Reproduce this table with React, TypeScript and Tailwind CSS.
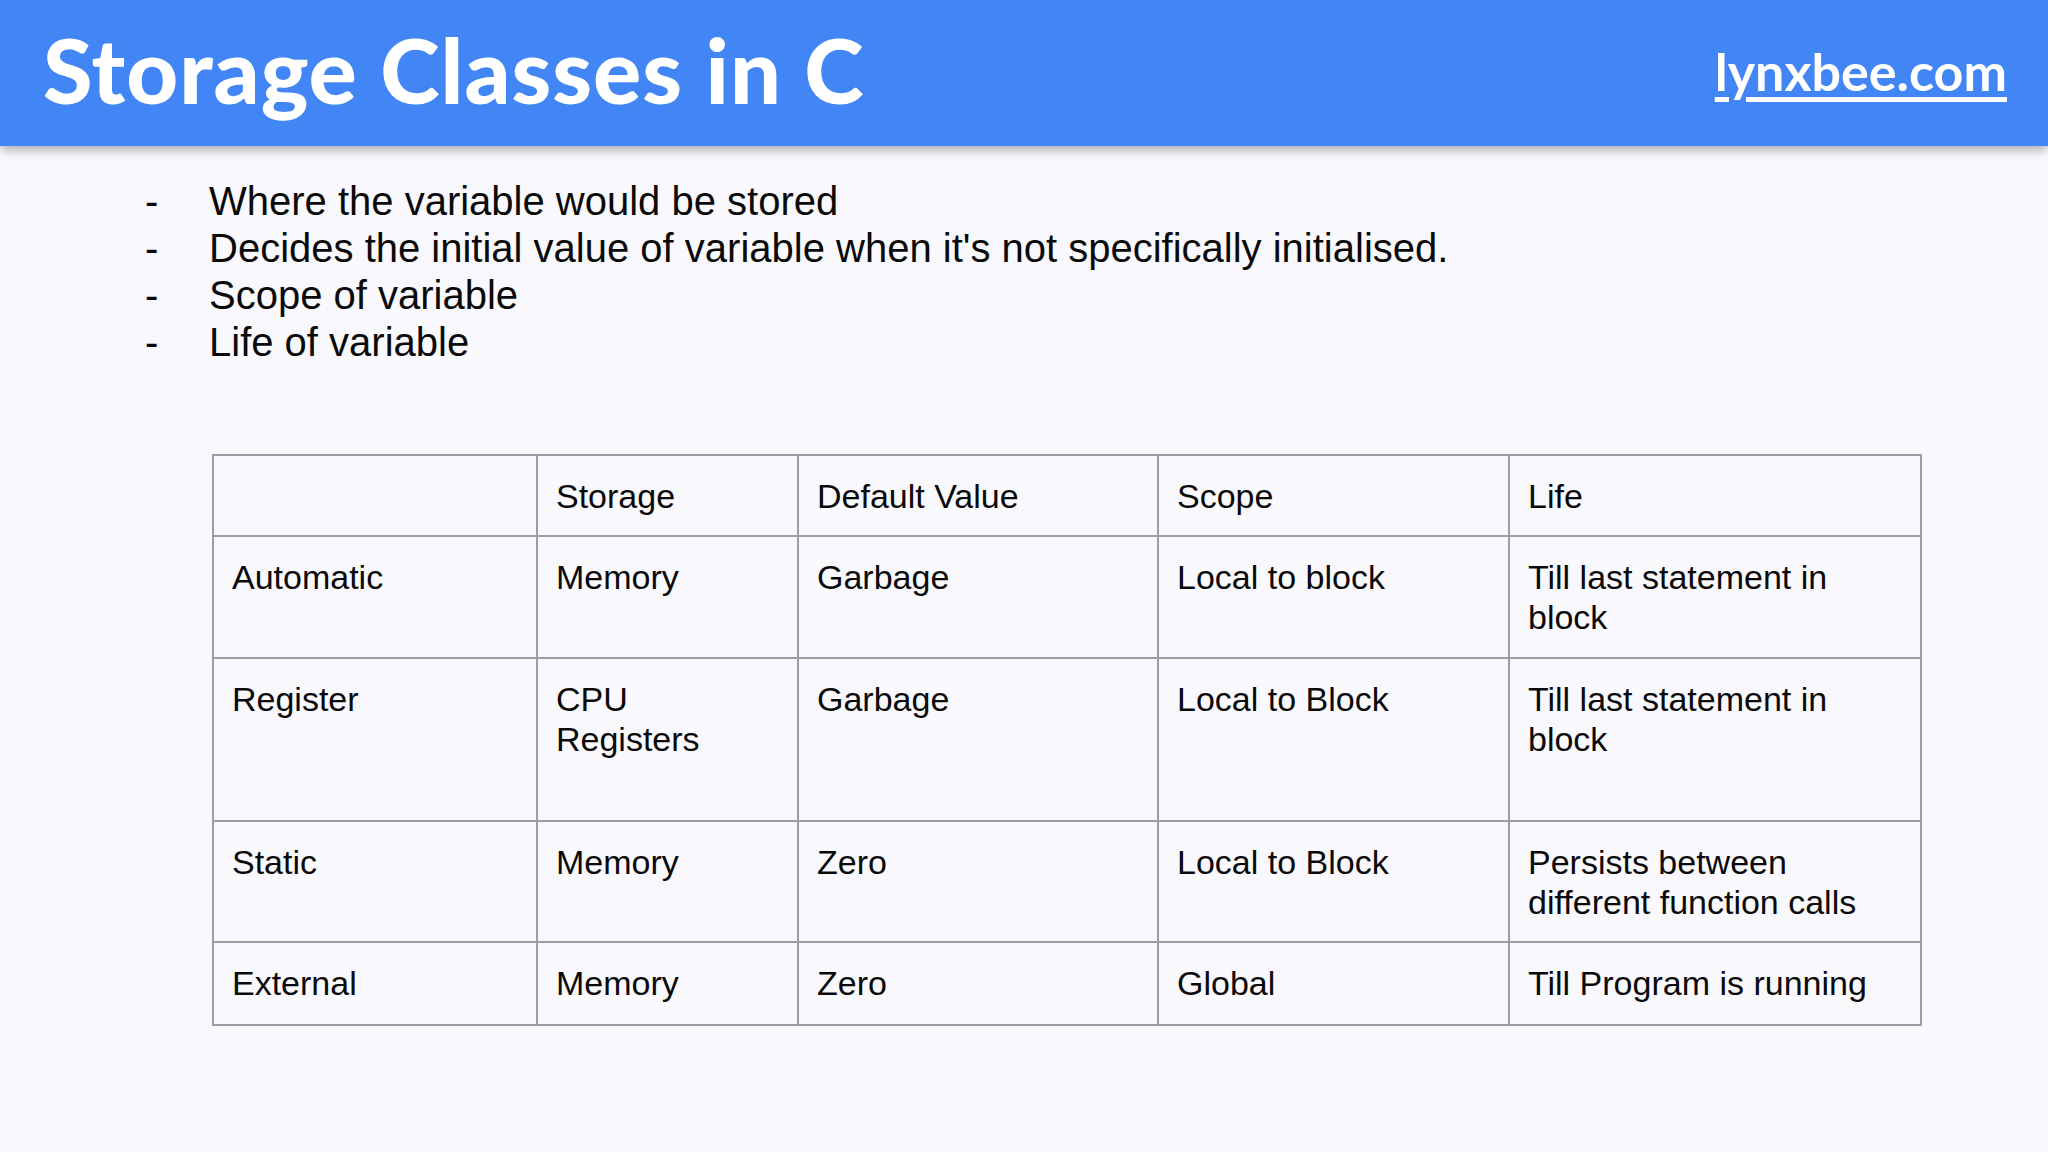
import React from "react";

const bullets = [
  "Where the variable would be stored",
  "Decides the initial value of variable when it's not specifically initialised.",
  "Scope of variable",
  "Life of variable",
];

const rows = [
  { h: "h-[81px]", cells: ["", "Storage", "Default Value", "Scope", "Life"] },
  {
    h: "h-[122px]",
    cells: ["Automatic", "Memory", "Garbage", "Local to block", "Till last statement in block"],
  },
  {
    h: "h-[163px]",
    cells: ["Register", "CPU\nRegisters", "Garbage", "Local to Block", "Till last statement in block"],
  },
  {
    h: "h-[121px]",
    cells: ["Static", "Memory", "Zero", "Local to Block", "Persists between different function calls"],
  },
  { h: "h-[83px]", cells: ["External", "Memory", "Zero", "Global", "Till Program is running"] },
];

const widths = ["w-[324px]", "w-[261px]", "w-[360px]", "w-[351px]", "w-[412px]"];

export default function App() {
  return (
    <div className="w-[2048px] h-[1152px] bg-[#f9f8fc] overflow-hidden font-['Liberation_Sans',Arial,sans-serif] text-[#0a0a0a]">
      <header className="h-[146px] bg-[#4285f4] flex items-center justify-between pl-[43px] pr-[41px] shadow-[0_4px_10px_rgba(0,0,0,0.3)] relative">
        <h1 className="font-['Lato',sans-serif] font-black text-white text-[90px] leading-none tracking-[1px] -mt-[8px]">
          Storage Classes in C
        </h1>
        <a className="font-['Lato',sans-serif] font-bold text-white text-[52px] leading-none underline decoration-[5px] underline-offset-[6px] -mt-[4px]">
          lynxbee.com
        </a>
      </header>

      <ul className="mt-[32px] ml-[145px] flex flex-col">
        {bullets.map((b) => (
          <li key={b} className="flex text-[40px] leading-[47px]">
            <span className="w-[64px]">-</span>
            <span>{b}</span>
          </li>
        ))}
      </ul>

      <table className="ml-[212px] mt-[88px] border-collapse table-fixed text-[34px] leading-[40px]">
        <tbody>
          {rows.map((r, i) => (
            <tr key={i} className={r.h}>
              {r.cells.map((c, j) => (
                <td
                  key={j}
                  className={`${widths[j]} border-2 border-[#9e9e9e] align-top px-[18px] pt-[20px] whitespace-pre-line`}
                >
                  {c}
                </td>
              ))}
            </tr>
          ))}
        </tbody>
      </table>
    </div>
  );
}
